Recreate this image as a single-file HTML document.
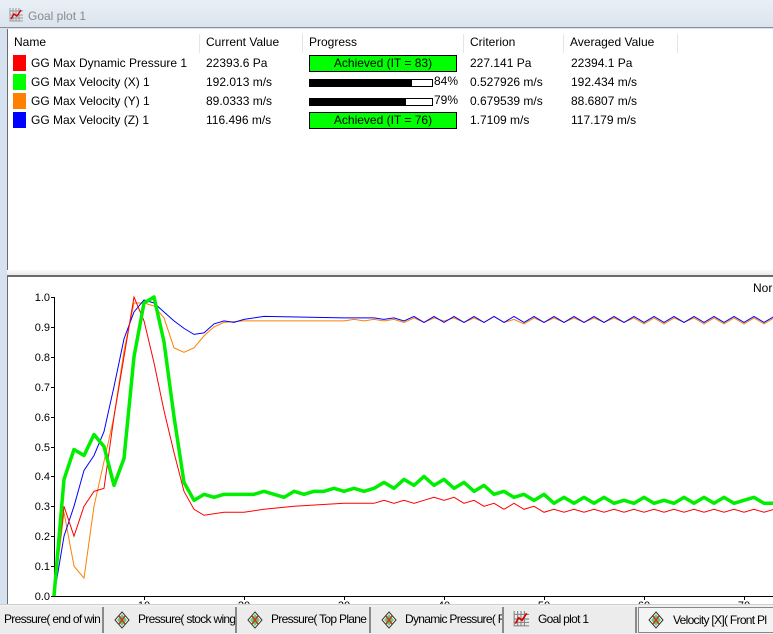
<!DOCTYPE html>
<html><head><meta charset="utf-8"><style>
*{margin:0;padding:0;box-sizing:border-box}
html,body{width:773px;height:634px;overflow:hidden}
body{background:#d6e2ef;font-family:"Liberation Sans",sans-serif;font-size:12px;color:#000;position:relative}
.title{position:absolute;left:0;top:0;width:773px;height:28px;background:linear-gradient(#e9eff6,#dbe4ee);border-bottom:1px solid #8a8f96}
.title span{position:absolute;left:28px;top:9px;color:#8a8a8a;font-size:12px}
.list{position:absolute;left:7px;top:29px;width:766px;height:241px;background:#fff;border-left:1px solid #6b6b6b}
.hdr{position:absolute;top:5px;height:19px;line-height:16px;padding-left:6px;border-right:1px solid #e5e5e5}
.cell{position:absolute;white-space:nowrap}
.sw{position:absolute;left:5px;width:13px;height:16px}
.ach{position:absolute;left:301px;width:148px;height:17px;background:#00ff00;border:1px solid #000;text-align:center;line-height:15px}
.bar{position:absolute;left:301px;width:124px;height:8px;background:#fff;border:1px solid #000}
.bar i{display:block;height:100%;background:#000}
.pct{position:absolute;left:426px}
.split{position:absolute;left:7px;top:270px;width:766px;height:7px;background:linear-gradient(#fafafa,#eaeaea);border-bottom:2px solid #6b6b6b}
.plot{position:absolute;left:7px;top:277px;width:766px;height:327px;background:#fff;border-left:1px solid #6b6b6b;overflow:hidden}
.tabs{position:absolute;left:0;top:604px;width:773px;height:30px;background:#f0f0f0;border-top:1px solid #d0d0d0;overflow:hidden}
.tab{position:absolute;top:2px;height:26px;background:#ececec;border-right:2px solid #8a8a8a;font-size:12px;letter-spacing:-0.7px;line-height:24px;white-space:nowrap;overflow:hidden}
.ic{position:absolute;top:6px}
</style></head><body>
<div class="title">
<svg style="position:absolute;left:9px;top:8px" width="14" height="14" viewBox="0 0 14 14"><path d="M1 0V13H14M4 0V13M7 0V13M10 0V13M1 3H14M1 7H14M1 10H14" stroke="#999" stroke-width="1" fill="none"/><path d="M2 11L5 6L8 8L12 2" stroke="#d00" stroke-width="1.5" fill="none"/></svg>
<span>Goal plot 1</span></div>
<div class="list">
<div class="hdr" style="left:0;width:192px">Name</div>
<div class="hdr" style="left:192px;width:103px">Current Value</div>
<div class="hdr" style="left:295px;width:161px">Progress</div>
<div class="hdr" style="left:456px;width:100px">Criterion</div>
<div class="hdr" style="left:556px;width:114px">Averaged Value</div>

<div class="sw" style="top:26px;background:#ff0000"></div>
<div class="sw" style="top:45px;background:#00ff00"></div>
<div class="sw" style="top:64px;background:#ff8000"></div>
<div class="sw" style="top:83px;background:#0000ff"></div>

<div class="cell" style="left:23px;top:27px">GG Max Dynamic Pressure 1</div>
<div class="cell" style="left:23px;top:46px">GG Max Velocity (X) 1</div>
<div class="cell" style="left:23px;top:65px">GG Max Velocity (Y) 1</div>
<div class="cell" style="left:23px;top:84px">GG Max Velocity (Z) 1</div>

<div class="cell" style="left:198px;top:27px">22393.6 Pa</div>
<div class="cell" style="left:198px;top:46px">192.013 m/s</div>
<div class="cell" style="left:198px;top:65px">89.0333 m/s</div>
<div class="cell" style="left:198px;top:84px">116.496 m/s</div>

<div class="ach" style="top:26px">Achieved (IT = 83)</div>
<div class="bar" style="top:50px"><i style="width:84%"></i></div><div class="pct cell" style="top:45px">84%</div>
<div class="bar" style="top:69px"><i style="width:79%"></i></div><div class="pct cell" style="top:64px">79%</div>
<div class="ach" style="top:83px">Achieved (IT = 76)</div>

<div class="cell" style="left:462px;top:27px">227.141 Pa</div>
<div class="cell" style="left:462px;top:46px">0.527926 m/s</div>
<div class="cell" style="left:462px;top:65px">0.679539 m/s</div>
<div class="cell" style="left:462px;top:84px">1.7109 m/s</div>

<div class="cell" style="left:563px;top:27px">22394.1 Pa</div>
<div class="cell" style="left:563px;top:46px">192.434 m/s</div>
<div class="cell" style="left:563px;top:65px">88.6807 m/s</div>
<div class="cell" style="left:563px;top:84px">117.179 m/s</div>
</div>
<div class="split"></div>
<div class="plot">
<svg width="766" height="327" viewBox="7 277 766 327" style="position:absolute;left:0;top:0" font-family="Liberation Sans, sans-serif" font-size="11">
<text x="752" y="292" font-size="12" fill="#000">Nor</text>
<g stroke="#000" stroke-width="1" fill="none">
<path d="M53.5 297V596.5H773"/>
<path d="M50 297.5H53M50 327.5H53M50 357.5H53M50 387.5H53M50 417.5H53M50 447.5H53M50 476.5H53M50 506.5H53M50 536.5H53M50 566.5H53M50 596.5H53"/>
<path d="M143.5 596V600M243.5 596V600M343.5 596V600M443.5 596V600M543.5 596V600M643.5 596V600M743.5 596V600"/>
</g>
<g fill="#000" text-anchor="end">
<text x="49" y="301">1.0</text><text x="49" y="331">0.9</text><text x="49" y="361">0.8</text><text x="49" y="391">0.7</text><text x="49" y="421">0.6</text><text x="49" y="451">0.5</text><text x="49" y="480">0.4</text><text x="49" y="510">0.3</text><text x="49" y="540">0.2</text><text x="49" y="570">0.1</text><text x="49" y="600">0.0</text>
</g>
<g fill="#000" text-anchor="middle">
<text x="143" y="609">10</text><text x="243" y="609">20</text><text x="343" y="609">30</text><text x="443" y="609">40</text><text x="543" y="609">50</text><text x="643" y="609">60</text><text x="743" y="609">70</text>
</g>
<g transform="translate(43,596) scale(10,-299)" fill="none">
<polyline vector-effect="non-scaling-stroke" stroke="#ff8000" stroke-width="1" points="1,0 2,.28 3,.1 4,.06 5,.3 6,.45 7,.6 8,.82 9,.98 10,.98 11,.97 12,.93 13,.83 14,.815 15,.83 16,.87 17,.9 18,.915 20,.92 30,.92 31,.925 32,.92 33,.925 34,.92 35,.925 36,.915 37,.93 38,.915 39,.93 40,.92 41,.93 42,.915 43,.93 44,.915 45,.935 46,.915 47,.925 48,.91 49,.93 50,.915 51,.93 52,.915 53,.93 54,.915 55,.93 56,.915 57,.93 58,.915 59,.93 60,.91 61,.93 62,.91 63,.93 64,.915 65,.93 66,.91 67,.93 68,.91 69,.93 70,.91 71,.93 72,.91 73,.93 74,.91"/>
<polyline vector-effect="non-scaling-stroke" stroke="#0000ff" stroke-width="1" points="1,0 2,.2 3,.3 4,.42 5,.47 6,.55 7,.7 8,.86 9,.95 10,.99 11,.98 12,.95 13,.92 14,.895 15,.875 16,.88 17,.91 18,.92 19,.915 20,.925 22,.935 30,.93 33,.93 34,.925 35,.93 36,.92 37,.935 38,.915 39,.935 40,.915 41,.935 42,.915 43,.935 44,.915 45,.935 46,.915 47,.935 48,.915 49,.935 50,.915 51,.935 52,.915 53,.935 54,.915 55,.935 56,.915 57,.935 58,.915 59,.935 60,.915 61,.935 62,.915 63,.935 64,.915 65,.935 66,.915 67,.935 68,.915 69,.935 70,.915 71,.935 72,.915 73,.935 74,.915"/>
<polyline vector-effect="non-scaling-stroke" stroke="#ff0000" stroke-width="1" points="1,0 2,.3 3,.2 4,.3 5,.35 6,.36 7,.6 8,.8 9,1 10,.92 11,.78 12,.62 13,.48 14,.35 15,.29 16,.27 18,.28 20,.28 22,.29 25,.3 30,.31 33,.31 34,.32 35,.31 36,.32 37,.31 38,.32 39,.33 40,.32 41,.33 42,.31 43,.32 44,.3 45,.31 46,.29 47,.31 48,.29 49,.3 50,.28 51,.29 52,.28 53,.29 54,.28 55,.29 56,.28 57,.29 58,.28 59,.29 60,.28 61,.29 62,.28 63,.29 64,.28 65,.29 66,.28 67,.29 68,.28 69,.29 70,.28 71,.29 72,.28 73,.29 74,.28"/>
<polyline vector-effect="non-scaling-stroke" stroke="#00ee00" stroke-width="3.5" stroke-linejoin="round" points="1,0 2,.39 3,.49 4,.47 5,.54 6,.5 7,.37 8,.46 9,.8 10,.98 11,1 12,.85 13,.6 14,.38 15,.32 16,.34 17,.33 18,.34 19,.34 20,.34 21,.34 22,.35 23,.34 24,.33 25,.35 26,.34 27,.35 28,.35 29,.36 30,.35 31,.36 32,.35 33,.36 34,.38 35,.36 36,.39 37,.37 38,.4 39,.37 40,.39 41,.36 42,.38 43,.35 44,.37 45,.34 46,.35 47,.33 48,.34 49,.32 50,.34 51,.31 52,.33 53,.31 54,.33 55,.31 56,.33 57,.31 58,.32 59,.31 60,.33 61,.31 62,.32 63,.31 64,.33 65,.31 66,.33 67,.31 68,.33 69,.31 70,.32 71,.33 72,.31 73,.31 74,.31"/>
</g>
</svg>
</div>
<div class="tabs">
<div class="tab" style="left:0;width:104px;padding-left:4px">Pressure( end of win</div>
<div class="tab" style="left:104px;width:133px;padding-left:34px">Pressure( stock wing</div>
<div class="tab" style="left:237px;width:134px;padding-left:34px">Pressure( Top Plane</div>
<div class="tab" style="left:371px;width:133px;padding-left:34px">Dynamic Pressure( F</div>
<div class="tab" style="left:504px;width:133px;padding-left:34px">Goal plot 1</div>
<div class="tab" style="left:638px;width:135px;padding-left:34px;background:#f4f4f4;border:1px solid #888;border-right:none">Velocity [X]( Front Pl</div>
<svg class="ic" style="left:113px" width="18" height="18" viewBox="0 0 18 18"><path d="M9 1L16 9L9 17L2 9Z" fill="#fff" stroke="#333"/><path d="M9 3L14 9L9 15L4 9Z" fill="#6c6"/><path d="M6 5L12 13M12 5L6 13" stroke="#c33" stroke-width="1.5"/></svg>
<svg class="ic" style="left:246px" width="18" height="18" viewBox="0 0 18 18"><path d="M9 1L16 9L9 17L2 9Z" fill="#fff" stroke="#333"/><path d="M9 3L14 9L9 15L4 9Z" fill="#6c6"/><path d="M6 5L12 13M12 5L6 13" stroke="#c33" stroke-width="1.5"/></svg>
<svg class="ic" style="left:380px" width="18" height="18" viewBox="0 0 18 18"><path d="M9 1L16 9L9 17L2 9Z" fill="#fff" stroke="#333"/><path d="M9 3L14 9L9 15L4 9Z" fill="#6c6"/><path d="M6 5L12 13M12 5L6 13" stroke="#c33" stroke-width="1.5"/></svg>
<svg class="ic" style="left:513px" width="16" height="16" viewBox="0 0 14 14"><path d="M1 0V13H14M4 0V13M7 0V13M10 0V13M1 3H14M1 7H14M1 10H14" stroke="#888" fill="none"/><path d="M2 11L5 6L8 8L12 2" stroke="#d00" stroke-width="1.5" fill="none"/></svg>
<svg class="ic" style="left:647px" width="18" height="18" viewBox="0 0 18 18"><path d="M9 1L16 9L9 17L2 9Z" fill="#fff" stroke="#333"/><path d="M9 3L14 9L9 15L4 9Z" fill="#6c6"/><path d="M6 5L12 13M12 5L6 13" stroke="#c33" stroke-width="1.5"/></svg>
</div>
</body></html>
